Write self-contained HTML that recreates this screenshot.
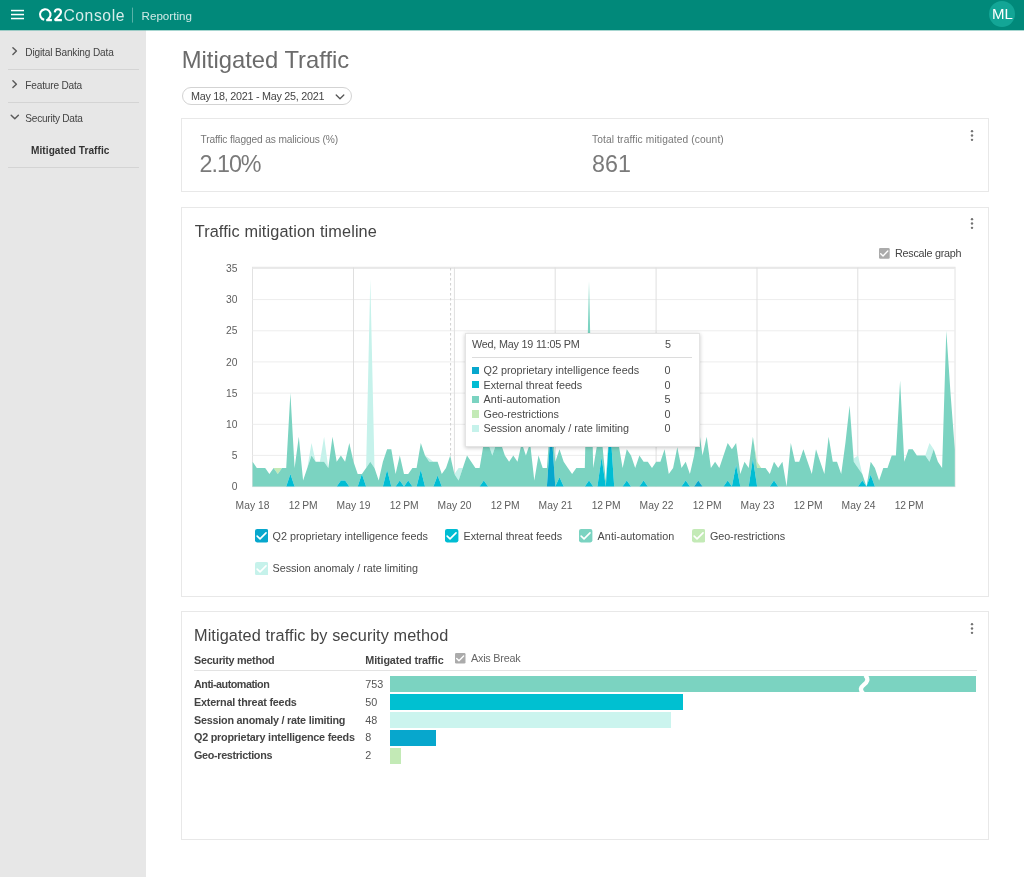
<!DOCTYPE html>
<html><head><meta charset="utf-8"><title>Mitigated Traffic</title>
<style>
html,body{margin:0;padding:0;}
body{width:1024px;height:877px;position:relative;overflow:hidden;background:#fff;font-family:"Liberation Sans",sans-serif;}
.a{position:absolute;}
.t{position:absolute;white-space:nowrap;}
#txt{position:absolute;left:0;top:0;width:1024px;height:877px;will-change:transform;}
.hdr{left:0;top:0;width:1024px;height:30px;background:#01897a;}
.side{left:0;top:30px;width:146px;height:847px;background:#e7e7e7;}
.sl{left:8px;width:131px;height:1px;background:#d4d4d4;}
.card{background:#fff;border:1px solid #e8e8e8;box-sizing:border-box;}
</style></head><body>
<div class="a hdr"></div>
<svg class="a" style="left:0;top:0" width="200" height="30" viewBox="0 0 200 30">
 <g fill="#fff"><rect x="11" y="9.8" width="13" height="1.5"/><rect x="11" y="13.8" width="13" height="1.5"/><rect x="11" y="17.8" width="13" height="1.5"/></g>
 <path d="M44.2 19.7 A5.25 5.25 0 1 1 47.7 19.2 M46.2 20.1 H51.9" fill="none" stroke="#fff" stroke-width="2.1"/>
 <path d="M54.75 12.4 C54.9 10.4 56.3 9.3 58 9.3 C59.8 9.3 61 10.5 61 12.1 C61 13.5 60.2 14.5 58.9 15.8 L55.2 19.5 L55.2 20.15 H61.9" fill="none" stroke="#fff" stroke-width="2.1" stroke-linejoin="bevel"/>
 <rect x="132" y="7.6" width="1" height="15" fill="#fff" opacity=".35"/>
</svg>
<div class="a" style="left:989px;top:1px;width:26px;height:26px;border-radius:13px;background:#13a696;"></div>
<div class="a side"></div>
<div class="a" style="left:0;top:30px;width:1024px;height:1px;background:#5fb5aa;opacity:.55"></div>
<div class="a sl" style="top:69px"></div><div class="a sl" style="top:102px"></div><div class="a sl" style="top:167px"></div>
<svg class="a" style="left:0;top:30px" width="30" height="120" viewBox="0 0 30 120">
 <g fill="none" stroke="#5a5a5a" stroke-width="1.45" stroke-linecap="round" stroke-linejoin="round">
 <path d="M12.9 17.7 L16.4 21.1 L12.9 24.5"/>
 <path d="M12.9 50.8 L16.4 54.2 L12.9 57.6"/>
 <path d="M11.2 85.2 L14.8 88.8 L18.4 85.2"/>
 </g></svg>
<div class="a" style="left:181.5px;top:87.2px;width:170px;height:18px;border:1px solid #d3d3d3;border-radius:9.5px;box-sizing:border-box;background:#fff"></div>
<svg class="a" style="left:334px;top:92px" width="12" height="10" viewBox="0 0 12 10"><path d="M2.2 3 L6 6.8 L9.8 3" fill="none" stroke="#555" stroke-width="1.3" stroke-linecap="round" stroke-linejoin="round"/></svg>

<div class="a card" style="left:181px;top:118px;width:808px;height:74px"></div>
<div class="a card" style="left:181px;top:207px;width:808px;height:390px"></div>
<div class="a card" style="left:181px;top:611px;width:808px;height:229px"></div>
<svg class="a" style="left:970.0px;top:128.60px" width="4" height="13" viewBox="0 0 4 13"><circle cx="2" cy="2.15" r="1.2" fill="#727272"/><circle cx="2" cy="6.5" r="1.2" fill="#727272"/><circle cx="2" cy="10.85" r="1.2" fill="#727272"/></svg><svg class="a" style="left:970.0px;top:217.15px" width="4" height="13" viewBox="0 0 4 13"><circle cx="2" cy="2.15" r="1.2" fill="#727272"/><circle cx="2" cy="6.5" r="1.2" fill="#727272"/><circle cx="2" cy="10.85" r="1.2" fill="#727272"/></svg><svg class="a" style="left:970.0px;top:621.90px" width="4" height="13" viewBox="0 0 4 13"><circle cx="2" cy="2.15" r="1.2" fill="#727272"/><circle cx="2" cy="6.5" r="1.2" fill="#727272"/><circle cx="2" cy="10.85" r="1.2" fill="#727272"/></svg><svg class="a" style="left:878.9px;top:248.0px" width="10.7" height="10.7" viewBox="0 0 13 13"><rect width="13" height="13" rx="1.5" fill="#ababab"/><path d="M2.1 6.9 L4.9 9.6 L10.7 3.7" fill="none" stroke="#fff" stroke-width="1.7" stroke-linecap="round" stroke-linejoin="round"/></svg><svg class="a" style="left:455.2px;top:653.0px" width="10.5" height="10.5" viewBox="0 0 13 13"><rect width="13" height="13" rx="1.5" fill="#ababab"/><path d="M2.1 6.9 L4.9 9.6 L10.7 3.7" fill="none" stroke="#fff" stroke-width="1.7" stroke-linecap="round" stroke-linejoin="round"/></svg>
<svg class="a" style="left:0;top:0" width="1024" height="877" viewBox="0 0 1024 877">
<rect x="252.5" y="267.3" width="702.5" height="219.3" fill="#fff" stroke="#e2e2e2" stroke-width="1"/>
<line x1="252.5" x2="955" y1="268.2" y2="268.2" stroke="#eaeaea" stroke-width="1.4"/>
<line x1="252.5" x2="955" y1="299.6" y2="299.6" stroke="#ededed" stroke-width="1"/>
<line x1="252.5" x2="955" y1="330.8" y2="330.8" stroke="#ededed" stroke-width="1"/>
<line x1="252.5" x2="955" y1="361.9" y2="361.9" stroke="#ededed" stroke-width="1"/>
<line x1="252.5" x2="955" y1="393.1" y2="393.1" stroke="#ededed" stroke-width="1"/>
<line x1="252.5" x2="955" y1="424.3" y2="424.3" stroke="#ededed" stroke-width="1"/>
<line x1="252.5" x2="955" y1="455.4" y2="455.4" stroke="#ededed" stroke-width="1"/>
<line x1="353.5" x2="353.5" y1="267.5" y2="486.5" stroke="#dfdfdf" stroke-width="1"/>
<line x1="454.4" x2="454.4" y1="267.5" y2="486.5" stroke="#dfdfdf" stroke-width="1"/>
<line x1="555.2" x2="555.2" y1="267.5" y2="486.5" stroke="#dfdfdf" stroke-width="1"/>
<line x1="656.1" x2="656.1" y1="267.5" y2="486.5" stroke="#dfdfdf" stroke-width="1"/>
<line x1="757.0" x2="757.0" y1="267.5" y2="486.5" stroke="#dfdfdf" stroke-width="1"/>
<line x1="857.8" x2="857.8" y1="267.5" y2="486.5" stroke="#dfdfdf" stroke-width="1"/>

<line x1="450.6" x2="450.6" y1="268" y2="486" stroke="#cfcfcf" stroke-width="1" stroke-dasharray="2.5,2.5"/>
<path d="M252.6,461.7 L256.8,467.9 L261.0,467.9 L265.2,467.9 L269.4,474.1 L273.6,467.9 L277.8,467.9 L282.0,467.9 L286.2,467.9 L290.4,393.1 L294.6,467.9 L298.8,436.7 L303.1,480.4 L307.3,467.9 L311.5,443.0 L315.7,461.7 L319.9,461.7 L324.1,436.7 L328.3,467.9 L332.5,436.7 L336.7,461.7 L340.9,455.4 L345.1,461.7 L349.3,443.0 L353.5,461.7 L357.7,474.1 L361.9,474.1 L366.1,467.9 L370.3,279.0 L374.5,467.9 L378.7,480.4 L382.9,461.7 L387.1,449.2 L391.3,449.2 L395.6,474.1 L399.8,455.4 L404.0,474.1 L408.2,474.1 L412.4,467.9 L416.6,467.9 L420.8,443.0 L425.0,455.4 L429.2,458.5 L433.4,461.7 L437.6,461.7 L441.8,474.1 L446.0,467.9 L450.2,455.4 L454.4,474.1 L458.6,467.9 L462.8,467.9 L467.0,455.4 L471.2,461.7 L475.4,467.9 L479.6,467.9 L483.8,443.0 L488.1,443.0 L492.3,443.0 L496.5,443.0 L500.7,443.0 L504.9,455.4 L509.1,461.7 L513.3,455.4 L517.5,461.7 L521.7,443.0 L525.9,455.4 L530.1,443.0 L534.3,480.4 L538.5,455.4 L542.7,467.9 L546.9,467.9 L551.1,411.8 L555.3,461.7 L559.5,449.2 L563.7,461.7 L567.9,467.9 L572.1,474.1 L576.3,467.9 L580.6,467.9 L584.8,467.9 L589.0,280.9 L593.2,467.9 L597.4,443.0 L601.6,436.7 L605.8,480.4 L610.0,418.0 L614.2,443.0 L618.4,443.0 L622.6,467.9 L626.8,449.2 L631.0,455.4 L635.2,467.9 L639.4,455.4 L643.6,461.7 L647.8,461.7 L652.0,467.9 L656.2,461.7 L660.4,461.7 L664.6,449.2 L668.8,474.1 L673.1,467.9 L677.3,447.3 L681.5,467.9 L685.7,461.7 L689.9,474.1 L694.1,455.4 L698.3,424.3 L702.5,455.4 L706.7,436.7 L710.9,467.9 L715.1,461.7 L719.3,467.9 L723.5,455.4 L727.7,443.0 L731.9,449.2 L736.1,443.0 L740.3,474.1 L744.5,461.7 L748.7,467.9 L752.9,436.7 L757.1,461.7 L761.3,467.9 L765.5,467.9 L769.8,474.1 L774.0,461.7 L778.2,467.9 L782.4,461.7 L786.6,486.6 L790.8,443.0 L795.0,461.7 L799.2,461.7 L803.4,449.2 L807.6,461.7 L811.8,474.1 L816.0,449.2 L820.2,461.7 L824.4,474.1 L828.6,436.7 L832.8,461.7 L837.0,461.7 L841.2,474.1 L845.4,443.0 L849.6,405.6 L853.8,458.5 L858.0,455.4 L862.3,474.1 L866.5,486.6 L870.7,461.7 L874.9,467.9 L879.1,480.4 L883.3,467.9 L887.5,467.9 L891.7,455.4 L895.9,455.4 L900.1,380.6 L904.3,461.7 L908.5,449.2 L912.7,449.2 L916.9,455.4 L921.1,455.4 L925.3,455.4 L929.5,443.0 L933.7,449.2 L937.9,461.7 L942.1,467.9 L946.3,330.8 L950.5,393.1 L954.8,449.2 L954.8,449.2 L950.5,393.1 L946.3,330.8 L942.1,467.9 L937.9,461.7 L933.7,449.2 L929.5,461.7 L925.3,455.4 L921.1,455.4 L916.9,455.4 L912.7,449.2 L908.5,449.2 L904.3,461.7 L900.1,380.6 L895.9,455.4 L891.7,455.4 L887.5,467.9 L883.3,467.9 L879.1,480.4 L874.9,467.9 L870.7,461.7 L866.5,486.6 L862.3,474.1 L858.0,467.9 L853.8,461.7 L849.6,405.6 L845.4,443.0 L841.2,474.1 L837.0,461.7 L832.8,461.7 L828.6,436.7 L824.4,474.1 L820.2,461.7 L816.0,449.2 L811.8,474.1 L807.6,461.7 L803.4,449.2 L799.2,461.7 L795.0,461.7 L790.8,443.0 L786.6,486.6 L782.4,461.7 L778.2,467.9 L774.0,461.7 L769.8,474.1 L765.5,467.9 L761.3,467.9 L757.1,461.7 L752.9,436.7 L748.7,467.9 L744.5,461.7 L740.3,474.1 L736.1,443.0 L731.9,449.2 L727.7,443.0 L723.5,455.4 L719.3,467.9 L715.1,461.7 L710.9,467.9 L706.7,436.7 L702.5,455.4 L698.3,424.3 L694.1,455.4 L689.9,474.1 L685.7,461.7 L681.5,467.9 L677.3,447.3 L673.1,467.9 L668.8,474.1 L664.6,449.2 L660.4,461.7 L656.2,461.7 L652.0,467.9 L647.8,461.7 L643.6,461.7 L639.4,455.4 L635.2,467.9 L631.0,455.4 L626.8,449.2 L622.6,467.9 L618.4,443.0 L614.2,443.0 L610.0,418.0 L605.8,480.4 L601.6,436.7 L597.4,443.0 L593.2,467.9 L589.0,280.9 L584.8,467.9 L580.6,467.9 L576.3,467.9 L572.1,474.1 L567.9,467.9 L563.7,461.7 L559.5,449.2 L555.3,461.7 L551.1,411.8 L546.9,467.9 L542.7,467.9 L538.5,455.4 L534.3,480.4 L530.1,443.0 L525.9,455.4 L521.7,443.0 L517.5,461.7 L513.3,455.4 L509.1,461.7 L504.9,455.4 L500.7,443.0 L496.5,443.0 L492.3,455.4 L488.1,443.0 L483.8,443.0 L479.6,467.9 L475.4,467.9 L471.2,461.7 L467.0,455.4 L462.8,467.9 L458.6,480.4 L454.4,474.1 L450.2,455.4 L446.0,467.9 L441.8,474.1 L437.6,461.7 L433.4,461.7 L429.2,461.7 L425.0,455.4 L420.8,443.0 L416.6,467.9 L412.4,467.9 L408.2,474.1 L404.0,474.1 L399.8,455.4 L395.6,474.1 L391.3,449.2 L387.1,449.2 L382.9,461.7 L378.7,480.4 L374.5,467.9 L370.3,461.7 L366.1,467.9 L361.9,474.1 L357.7,474.1 L353.5,461.7 L349.3,443.0 L345.1,461.7 L340.9,455.4 L336.7,461.7 L332.5,436.7 L328.3,467.9 L324.1,461.7 L319.9,461.7 L315.7,461.7 L311.5,455.4 L307.3,467.9 L303.1,480.4 L298.8,436.7 L294.6,467.9 L290.4,393.1 L286.2,467.9 L282.0,467.9 L277.8,467.9 L273.6,467.9 L269.4,474.1 L265.2,467.9 L261.0,467.9 L256.8,467.9 L252.6,461.7Z" fill="#c6f2eb"/>
<path d="M252.6,461.7 L256.8,467.9 L261.0,467.9 L265.2,467.9 L269.4,474.1 L273.6,467.9 L277.8,467.9 L282.0,467.9 L286.2,467.9 L290.4,393.1 L294.6,467.9 L298.8,436.7 L303.1,480.4 L307.3,467.9 L311.5,455.4 L315.7,461.7 L319.9,461.7 L324.1,461.7 L328.3,467.9 L332.5,436.7 L336.7,461.7 L340.9,455.4 L345.1,461.7 L349.3,443.0 L353.5,461.7 L357.7,474.1 L361.9,474.1 L366.1,467.9 L370.3,461.7 L374.5,467.9 L378.7,480.4 L382.9,461.7 L387.1,449.2 L391.3,449.2 L395.6,474.1 L399.8,455.4 L404.0,474.1 L408.2,474.1 L412.4,467.9 L416.6,467.9 L420.8,443.0 L425.0,455.4 L429.2,461.7 L433.4,461.7 L437.6,461.7 L441.8,474.1 L446.0,467.9 L450.2,455.4 L454.4,474.1 L458.6,480.4 L462.8,467.9 L467.0,455.4 L471.2,461.7 L475.4,467.9 L479.6,467.9 L483.8,443.0 L488.1,443.0 L492.3,455.4 L496.5,443.0 L500.7,443.0 L504.9,455.4 L509.1,461.7 L513.3,455.4 L517.5,461.7 L521.7,443.0 L525.9,455.4 L530.1,443.0 L534.3,480.4 L538.5,455.4 L542.7,467.9 L546.9,467.9 L551.1,411.8 L555.3,461.7 L559.5,449.2 L563.7,461.7 L567.9,467.9 L572.1,474.1 L576.3,467.9 L580.6,467.9 L584.8,467.9 L589.0,280.9 L593.2,467.9 L597.4,443.0 L601.6,436.7 L605.8,480.4 L610.0,418.0 L614.2,443.0 L618.4,443.0 L622.6,467.9 L626.8,449.2 L631.0,455.4 L635.2,467.9 L639.4,455.4 L643.6,461.7 L647.8,461.7 L652.0,467.9 L656.2,461.7 L660.4,461.7 L664.6,449.2 L668.8,474.1 L673.1,467.9 L677.3,447.3 L681.5,467.9 L685.7,461.7 L689.9,474.1 L694.1,455.4 L698.3,424.3 L702.5,455.4 L706.7,436.7 L710.9,467.9 L715.1,461.7 L719.3,467.9 L723.5,455.4 L727.7,443.0 L731.9,449.2 L736.1,443.0 L740.3,474.1 L744.5,461.7 L748.7,467.9 L752.9,436.7 L757.1,461.7 L761.3,467.9 L765.5,467.9 L769.8,474.1 L774.0,461.7 L778.2,467.9 L782.4,461.7 L786.6,486.6 L790.8,443.0 L795.0,461.7 L799.2,461.7 L803.4,449.2 L807.6,461.7 L811.8,474.1 L816.0,449.2 L820.2,461.7 L824.4,474.1 L828.6,436.7 L832.8,461.7 L837.0,461.7 L841.2,474.1 L845.4,443.0 L849.6,405.6 L853.8,461.7 L858.0,467.9 L862.3,474.1 L866.5,486.6 L870.7,461.7 L874.9,467.9 L879.1,480.4 L883.3,467.9 L887.5,467.9 L891.7,455.4 L895.9,455.4 L900.1,380.6 L904.3,461.7 L908.5,449.2 L912.7,449.2 L916.9,455.4 L921.1,455.4 L925.3,455.4 L929.5,461.7 L933.7,449.2 L937.9,461.7 L942.1,467.9 L946.3,330.8 L950.5,393.1 L954.8,449.2 L954.8,449.2 L950.5,393.1 L946.3,330.8 L942.1,467.9 L937.9,461.7 L933.7,449.2 L929.5,461.7 L925.3,455.4 L921.1,455.4 L916.9,455.4 L912.7,449.2 L908.5,449.2 L904.3,461.7 L900.1,380.6 L895.9,455.4 L891.7,455.4 L887.5,467.9 L883.3,467.9 L879.1,480.4 L874.9,467.9 L870.7,461.7 L866.5,486.6 L862.3,474.1 L858.0,467.9 L853.8,461.7 L849.6,405.6 L845.4,443.0 L841.2,474.1 L837.0,461.7 L832.8,461.7 L828.6,436.7 L824.4,474.1 L820.2,461.7 L816.0,449.2 L811.8,474.1 L807.6,461.7 L803.4,449.2 L799.2,461.7 L795.0,461.7 L790.8,443.0 L786.6,486.6 L782.4,461.7 L778.2,467.9 L774.0,461.7 L769.8,474.1 L765.5,467.9 L761.3,467.9 L757.1,467.9 L752.9,436.7 L748.7,467.9 L744.5,461.7 L740.3,474.1 L736.1,443.0 L731.9,449.2 L727.7,443.0 L723.5,455.4 L719.3,467.9 L715.1,461.7 L710.9,467.9 L706.7,436.7 L702.5,455.4 L698.3,424.3 L694.1,455.4 L689.9,474.1 L685.7,461.7 L681.5,467.9 L677.3,447.3 L673.1,467.9 L668.8,474.1 L664.6,449.2 L660.4,461.7 L656.2,461.7 L652.0,467.9 L647.8,461.7 L643.6,461.7 L639.4,455.4 L635.2,467.9 L631.0,455.4 L626.8,449.2 L622.6,467.9 L618.4,443.0 L614.2,443.0 L610.0,418.0 L605.8,480.4 L601.6,436.7 L597.4,443.0 L593.2,467.9 L589.0,280.9 L584.8,467.9 L580.6,467.9 L576.3,467.9 L572.1,474.1 L567.9,467.9 L563.7,461.7 L559.5,449.2 L555.3,461.7 L551.1,411.8 L546.9,467.9 L542.7,467.9 L538.5,455.4 L534.3,480.4 L530.1,443.0 L525.9,455.4 L521.7,443.0 L517.5,461.7 L513.3,455.4 L509.1,461.7 L504.9,455.4 L500.7,443.0 L496.5,443.0 L492.3,455.4 L488.1,443.0 L483.8,443.0 L479.6,467.9 L475.4,467.9 L471.2,461.7 L467.0,455.4 L462.8,467.9 L458.6,480.4 L454.4,474.1 L450.2,455.4 L446.0,467.9 L441.8,474.1 L437.6,461.7 L433.4,461.7 L429.2,461.7 L425.0,455.4 L420.8,443.0 L416.6,467.9 L412.4,467.9 L408.2,474.1 L404.0,474.1 L399.8,455.4 L395.6,474.1 L391.3,449.2 L387.1,449.2 L382.9,461.7 L378.7,480.4 L374.5,467.9 L370.3,461.7 L366.1,467.9 L361.9,474.1 L357.7,474.1 L353.5,461.7 L349.3,443.0 L345.1,461.7 L340.9,455.4 L336.7,461.7 L332.5,436.7 L328.3,467.9 L324.1,461.7 L319.9,461.7 L315.7,461.7 L311.5,455.4 L307.3,467.9 L303.1,480.4 L298.8,436.7 L294.6,467.9 L290.4,393.1 L286.2,467.9 L282.0,467.9 L277.8,474.1 L273.6,467.9 L269.4,474.1 L265.2,467.9 L261.0,467.9 L256.8,467.9 L252.6,461.7Z" fill="#c3eab6"/>
<path d="M252.6,461.7 L256.8,467.9 L261.0,467.9 L265.2,467.9 L269.4,474.1 L273.6,467.9 L277.8,474.1 L282.0,467.9 L286.2,467.9 L290.4,393.1 L294.6,467.9 L298.8,436.7 L303.1,480.4 L307.3,467.9 L311.5,455.4 L315.7,461.7 L319.9,461.7 L324.1,461.7 L328.3,467.9 L332.5,436.7 L336.7,461.7 L340.9,455.4 L345.1,461.7 L349.3,443.0 L353.5,461.7 L357.7,474.1 L361.9,474.1 L366.1,467.9 L370.3,461.7 L374.5,467.9 L378.7,480.4 L382.9,461.7 L387.1,449.2 L391.3,449.2 L395.6,474.1 L399.8,455.4 L404.0,474.1 L408.2,474.1 L412.4,467.9 L416.6,467.9 L420.8,443.0 L425.0,455.4 L429.2,461.7 L433.4,461.7 L437.6,461.7 L441.8,474.1 L446.0,467.9 L450.2,455.4 L454.4,474.1 L458.6,480.4 L462.8,467.9 L467.0,455.4 L471.2,461.7 L475.4,467.9 L479.6,467.9 L483.8,443.0 L488.1,443.0 L492.3,455.4 L496.5,443.0 L500.7,443.0 L504.9,455.4 L509.1,461.7 L513.3,455.4 L517.5,461.7 L521.7,443.0 L525.9,455.4 L530.1,443.0 L534.3,480.4 L538.5,455.4 L542.7,467.9 L546.9,467.9 L551.1,411.8 L555.3,461.7 L559.5,449.2 L563.7,461.7 L567.9,467.9 L572.1,474.1 L576.3,467.9 L580.6,467.9 L584.8,467.9 L589.0,280.9 L593.2,467.9 L597.4,443.0 L601.6,436.7 L605.8,480.4 L610.0,418.0 L614.2,443.0 L618.4,443.0 L622.6,467.9 L626.8,449.2 L631.0,455.4 L635.2,467.9 L639.4,455.4 L643.6,461.7 L647.8,461.7 L652.0,467.9 L656.2,461.7 L660.4,461.7 L664.6,449.2 L668.8,474.1 L673.1,467.9 L677.3,447.3 L681.5,467.9 L685.7,461.7 L689.9,474.1 L694.1,455.4 L698.3,424.3 L702.5,455.4 L706.7,436.7 L710.9,467.9 L715.1,461.7 L719.3,467.9 L723.5,455.4 L727.7,443.0 L731.9,449.2 L736.1,443.0 L740.3,474.1 L744.5,461.7 L748.7,467.9 L752.9,436.7 L757.1,467.9 L761.3,467.9 L765.5,467.9 L769.8,474.1 L774.0,461.7 L778.2,467.9 L782.4,461.7 L786.6,486.6 L790.8,443.0 L795.0,461.7 L799.2,461.7 L803.4,449.2 L807.6,461.7 L811.8,474.1 L816.0,449.2 L820.2,461.7 L824.4,474.1 L828.6,436.7 L832.8,461.7 L837.0,461.7 L841.2,474.1 L845.4,443.0 L849.6,405.6 L853.8,461.7 L858.0,467.9 L862.3,474.1 L866.5,486.6 L870.7,461.7 L874.9,467.9 L879.1,480.4 L883.3,467.9 L887.5,467.9 L891.7,455.4 L895.9,455.4 L900.1,380.6 L904.3,461.7 L908.5,449.2 L912.7,449.2 L916.9,455.4 L921.1,455.4 L925.3,455.4 L929.5,461.7 L933.7,449.2 L937.9,461.7 L942.1,467.9 L946.3,330.8 L950.5,393.1 L954.8,449.2 L954.8,486.6 L950.5,486.6 L946.3,486.6 L942.1,486.6 L937.9,486.6 L933.7,486.6 L929.5,486.6 L925.3,486.6 L921.1,486.6 L916.9,486.6 L912.7,486.6 L908.5,486.6 L904.3,486.6 L900.1,486.6 L895.9,486.6 L891.7,486.6 L887.5,486.6 L883.3,486.6 L879.1,486.6 L874.9,486.6 L870.7,474.8 L866.5,486.6 L862.3,480.4 L858.0,486.6 L853.8,486.6 L849.6,486.6 L845.4,486.6 L841.2,486.6 L837.0,486.6 L832.8,486.6 L828.6,486.6 L824.4,486.6 L820.2,486.6 L816.0,486.6 L811.8,486.6 L807.6,486.6 L803.4,486.6 L799.2,486.6 L795.0,486.6 L790.8,486.6 L786.6,486.6 L782.4,486.6 L778.2,486.6 L774.0,480.4 L769.8,486.6 L765.5,486.6 L761.3,486.6 L757.1,486.6 L752.9,458.5 L748.7,486.6 L744.5,486.6 L740.3,486.6 L736.1,464.8 L731.9,486.6 L727.7,480.4 L723.5,486.6 L719.3,486.6 L715.1,486.6 L710.9,486.6 L706.7,486.6 L702.5,486.6 L698.3,480.4 L694.1,486.6 L689.9,486.6 L685.7,480.4 L681.5,486.6 L677.3,486.6 L673.1,486.6 L668.8,486.6 L664.6,486.6 L660.4,486.6 L656.2,486.6 L652.0,486.6 L647.8,486.6 L643.6,480.4 L639.4,486.6 L635.2,486.6 L631.0,486.6 L626.8,480.4 L622.6,486.6 L618.4,486.6 L614.2,486.6 L610.0,424.3 L605.8,486.6 L601.6,457.3 L597.4,486.6 L593.2,486.6 L589.0,480.4 L584.8,486.6 L580.6,486.6 L576.3,486.6 L572.1,486.6 L567.9,486.6 L563.7,486.6 L559.5,477.2 L555.3,486.6 L551.1,424.3 L546.9,486.6 L542.7,486.6 L538.5,486.6 L534.3,486.6 L530.1,486.6 L525.9,486.6 L521.7,486.6 L517.5,486.6 L513.3,486.6 L509.1,486.6 L504.9,486.6 L500.7,486.6 L496.5,486.6 L492.3,486.6 L488.1,486.6 L483.8,480.4 L479.6,486.6 L475.4,486.6 L471.2,486.6 L467.0,486.6 L462.8,486.6 L458.6,486.6 L454.4,486.6 L450.2,486.6 L446.0,486.6 L441.8,486.6 L437.6,475.4 L433.4,486.6 L429.2,486.6 L425.0,486.6 L420.8,469.8 L416.6,486.6 L412.4,486.6 L408.2,480.4 L404.0,486.6 L399.8,480.4 L395.6,486.6 L391.3,486.6 L387.1,469.8 L382.9,486.6 L378.7,486.6 L374.5,486.6 L370.3,486.6 L366.1,486.6 L361.9,474.1 L357.7,486.6 L353.5,486.6 L349.3,486.6 L345.1,480.4 L340.9,480.4 L336.7,486.6 L332.5,486.6 L328.3,486.6 L324.1,486.6 L319.9,486.6 L315.7,486.6 L311.5,486.6 L307.3,486.6 L303.1,486.6 L298.8,486.6 L294.6,486.6 L290.4,474.1 L286.2,486.6 L282.0,486.6 L277.8,486.6 L273.6,486.6 L269.4,486.6 L265.2,486.6 L261.0,486.6 L256.8,486.6 L252.6,486.6Z" fill="#7bd3c1"/>
<path d="M252.6,486.6 L256.8,486.6 L261.0,486.6 L265.2,486.6 L269.4,486.6 L273.6,486.6 L277.8,486.6 L282.0,486.6 L286.2,486.6 L290.4,474.1 L294.6,486.6 L298.8,486.6 L303.1,486.6 L307.3,486.6 L311.5,486.6 L315.7,486.6 L319.9,486.6 L324.1,486.6 L328.3,486.6 L332.5,486.6 L336.7,486.6 L340.9,480.4 L345.1,480.4 L349.3,486.6 L353.5,486.6 L357.7,486.6 L361.9,474.1 L366.1,486.6 L370.3,486.6 L374.5,486.6 L378.7,486.6 L382.9,486.6 L387.1,469.8 L391.3,486.6 L395.6,486.6 L399.8,480.4 L404.0,486.6 L408.2,480.4 L412.4,486.6 L416.6,486.6 L420.8,469.8 L425.0,486.6 L429.2,486.6 L433.4,486.6 L437.6,475.4 L441.8,486.6 L446.0,486.6 L450.2,486.6 L454.4,486.6 L458.6,486.6 L462.8,486.6 L467.0,486.6 L471.2,486.6 L475.4,486.6 L479.6,486.6 L483.8,480.4 L488.1,486.6 L492.3,486.6 L496.5,486.6 L500.7,486.6 L504.9,486.6 L509.1,486.6 L513.3,486.6 L517.5,486.6 L521.7,486.6 L525.9,486.6 L530.1,486.6 L534.3,486.6 L538.5,486.6 L542.7,486.6 L546.9,486.6 L551.1,424.3 L555.3,486.6 L559.5,477.2 L563.7,486.6 L567.9,486.6 L572.1,486.6 L576.3,486.6 L580.6,486.6 L584.8,486.6 L589.0,480.4 L593.2,486.6 L597.4,486.6 L601.6,457.3 L605.8,486.6 L610.0,424.3 L614.2,486.6 L618.4,486.6 L622.6,486.6 L626.8,480.4 L631.0,486.6 L635.2,486.6 L639.4,486.6 L643.6,480.4 L647.8,486.6 L652.0,486.6 L656.2,486.6 L660.4,486.6 L664.6,486.6 L668.8,486.6 L673.1,486.6 L677.3,486.6 L681.5,486.6 L685.7,480.4 L689.9,486.6 L694.1,486.6 L698.3,480.4 L702.5,486.6 L706.7,486.6 L710.9,486.6 L715.1,486.6 L719.3,486.6 L723.5,486.6 L727.7,480.4 L731.9,486.6 L736.1,464.8 L740.3,486.6 L744.5,486.6 L748.7,486.6 L752.9,458.5 L757.1,486.6 L761.3,486.6 L765.5,486.6 L769.8,486.6 L774.0,480.4 L778.2,486.6 L782.4,486.6 L786.6,486.6 L790.8,486.6 L795.0,486.6 L799.2,486.6 L803.4,486.6 L807.6,486.6 L811.8,486.6 L816.0,486.6 L820.2,486.6 L824.4,486.6 L828.6,486.6 L832.8,486.6 L837.0,486.6 L841.2,486.6 L845.4,486.6 L849.6,486.6 L853.8,486.6 L858.0,486.6 L862.3,480.4 L866.5,486.6 L870.7,474.8 L874.9,486.6 L879.1,486.6 L883.3,486.6 L887.5,486.6 L891.7,486.6 L895.9,486.6 L900.1,486.6 L904.3,486.6 L908.5,486.6 L912.7,486.6 L916.9,486.6 L921.1,486.6 L925.3,486.6 L929.5,486.6 L933.7,486.6 L937.9,486.6 L942.1,486.6 L946.3,486.6 L950.5,486.6 L954.8,486.6 L954.8,486.6 L950.5,486.6 L946.3,486.6 L942.1,486.6 L937.9,486.6 L933.7,486.6 L929.5,486.6 L925.3,486.6 L921.1,486.6 L916.9,486.6 L912.7,486.6 L908.5,486.6 L904.3,486.6 L900.1,486.6 L895.9,486.6 L891.7,486.6 L887.5,486.6 L883.3,486.6 L879.1,486.6 L874.9,486.6 L870.7,486.6 L866.5,486.6 L862.3,486.6 L858.0,486.6 L853.8,486.6 L849.6,486.6 L845.4,486.6 L841.2,486.6 L837.0,486.6 L832.8,486.6 L828.6,486.6 L824.4,486.6 L820.2,486.6 L816.0,486.6 L811.8,486.6 L807.6,486.6 L803.4,486.6 L799.2,486.6 L795.0,486.6 L790.8,486.6 L786.6,486.6 L782.4,486.6 L778.2,486.6 L774.0,486.6 L769.8,486.6 L765.5,486.6 L761.3,486.6 L757.1,486.6 L752.9,486.6 L748.7,486.6 L744.5,486.6 L740.3,486.6 L736.1,486.6 L731.9,486.6 L727.7,486.6 L723.5,486.6 L719.3,486.6 L715.1,486.6 L710.9,486.6 L706.7,486.6 L702.5,486.6 L698.3,480.4 L694.1,486.6 L689.9,486.6 L685.7,486.6 L681.5,486.6 L677.3,486.6 L673.1,486.6 L668.8,486.6 L664.6,486.6 L660.4,486.6 L656.2,486.6 L652.0,486.6 L647.8,486.6 L643.6,486.6 L639.4,486.6 L635.2,486.6 L631.0,486.6 L626.8,486.6 L622.6,486.6 L618.4,486.6 L614.2,486.6 L610.0,486.6 L605.8,486.6 L601.6,486.6 L597.4,486.6 L593.2,486.6 L589.0,486.6 L584.8,486.6 L580.6,486.6 L576.3,486.6 L572.1,486.6 L567.9,486.6 L563.7,486.6 L559.5,486.6 L555.3,486.6 L551.1,424.3 L546.9,486.6 L542.7,486.6 L538.5,486.6 L534.3,486.6 L530.1,486.6 L525.9,486.6 L521.7,486.6 L517.5,486.6 L513.3,486.6 L509.1,486.6 L504.9,486.6 L500.7,486.6 L496.5,486.6 L492.3,486.6 L488.1,486.6 L483.8,486.6 L479.6,486.6 L475.4,486.6 L471.2,486.6 L467.0,486.6 L462.8,486.6 L458.6,486.6 L454.4,486.6 L450.2,486.6 L446.0,486.6 L441.8,486.6 L437.6,486.6 L433.4,486.6 L429.2,486.6 L425.0,486.6 L420.8,486.6 L416.6,486.6 L412.4,486.6 L408.2,486.6 L404.0,486.6 L399.8,486.6 L395.6,486.6 L391.3,486.6 L387.1,486.6 L382.9,486.6 L378.7,486.6 L374.5,486.6 L370.3,486.6 L366.1,486.6 L361.9,486.6 L357.7,486.6 L353.5,486.6 L349.3,486.6 L345.1,486.6 L340.9,486.6 L336.7,486.6 L332.5,486.6 L328.3,486.6 L324.1,486.6 L319.9,486.6 L315.7,486.6 L311.5,486.6 L307.3,486.6 L303.1,486.6 L298.8,486.6 L294.6,486.6 L290.4,486.6 L286.2,486.6 L282.0,486.6 L277.8,486.6 L273.6,486.6 L269.4,486.6 L265.2,486.6 L261.0,486.6 L256.8,486.6 L252.6,486.6Z" fill="#00bdd3"/>
<path d="M252.6,486.6 L256.8,486.6 L261.0,486.6 L265.2,486.6 L269.4,486.6 L273.6,486.6 L277.8,486.6 L282.0,486.6 L286.2,486.6 L290.4,486.6 L294.6,486.6 L298.8,486.6 L303.1,486.6 L307.3,486.6 L311.5,486.6 L315.7,486.6 L319.9,486.6 L324.1,486.6 L328.3,486.6 L332.5,486.6 L336.7,486.6 L340.9,486.6 L345.1,486.6 L349.3,486.6 L353.5,486.6 L357.7,486.6 L361.9,486.6 L366.1,486.6 L370.3,486.6 L374.5,486.6 L378.7,486.6 L382.9,486.6 L387.1,486.6 L391.3,486.6 L395.6,486.6 L399.8,486.6 L404.0,486.6 L408.2,486.6 L412.4,486.6 L416.6,486.6 L420.8,486.6 L425.0,486.6 L429.2,486.6 L433.4,486.6 L437.6,486.6 L441.8,486.6 L446.0,486.6 L450.2,486.6 L454.4,486.6 L458.6,486.6 L462.8,486.6 L467.0,486.6 L471.2,486.6 L475.4,486.6 L479.6,486.6 L483.8,486.6 L488.1,486.6 L492.3,486.6 L496.5,486.6 L500.7,486.6 L504.9,486.6 L509.1,486.6 L513.3,486.6 L517.5,486.6 L521.7,486.6 L525.9,486.6 L530.1,486.6 L534.3,486.6 L538.5,486.6 L542.7,486.6 L546.9,486.6 L551.1,424.3 L555.3,486.6 L559.5,486.6 L563.7,486.6 L567.9,486.6 L572.1,486.6 L576.3,486.6 L580.6,486.6 L584.8,486.6 L589.0,486.6 L593.2,486.6 L597.4,486.6 L601.6,486.6 L605.8,486.6 L610.0,486.6 L614.2,486.6 L618.4,486.6 L622.6,486.6 L626.8,486.6 L631.0,486.6 L635.2,486.6 L639.4,486.6 L643.6,486.6 L647.8,486.6 L652.0,486.6 L656.2,486.6 L660.4,486.6 L664.6,486.6 L668.8,486.6 L673.1,486.6 L677.3,486.6 L681.5,486.6 L685.7,486.6 L689.9,486.6 L694.1,486.6 L698.3,480.4 L702.5,486.6 L706.7,486.6 L710.9,486.6 L715.1,486.6 L719.3,486.6 L723.5,486.6 L727.7,486.6 L731.9,486.6 L736.1,486.6 L740.3,486.6 L744.5,486.6 L748.7,486.6 L752.9,486.6 L757.1,486.6 L761.3,486.6 L765.5,486.6 L769.8,486.6 L774.0,486.6 L778.2,486.6 L782.4,486.6 L786.6,486.6 L790.8,486.6 L795.0,486.6 L799.2,486.6 L803.4,486.6 L807.6,486.6 L811.8,486.6 L816.0,486.6 L820.2,486.6 L824.4,486.6 L828.6,486.6 L832.8,486.6 L837.0,486.6 L841.2,486.6 L845.4,486.6 L849.6,486.6 L853.8,486.6 L858.0,486.6 L862.3,486.6 L866.5,486.6 L870.7,486.6 L874.9,486.6 L879.1,486.6 L883.3,486.6 L887.5,486.6 L891.7,486.6 L895.9,486.6 L900.1,486.6 L904.3,486.6 L908.5,486.6 L912.7,486.6 L916.9,486.6 L921.1,486.6 L925.3,486.6 L929.5,486.6 L933.7,486.6 L937.9,486.6 L942.1,486.6 L946.3,486.6 L950.5,486.6 L954.8,486.6 L954.8,486.6 L950.5,486.6 L946.3,486.6 L942.1,486.6 L937.9,486.6 L933.7,486.6 L929.5,486.6 L925.3,486.6 L921.1,486.6 L916.9,486.6 L912.7,486.6 L908.5,486.6 L904.3,486.6 L900.1,486.6 L895.9,486.6 L891.7,486.6 L887.5,486.6 L883.3,486.6 L879.1,486.6 L874.9,486.6 L870.7,486.6 L866.5,486.6 L862.3,486.6 L858.0,486.6 L853.8,486.6 L849.6,486.6 L845.4,486.6 L841.2,486.6 L837.0,486.6 L832.8,486.6 L828.6,486.6 L824.4,486.6 L820.2,486.6 L816.0,486.6 L811.8,486.6 L807.6,486.6 L803.4,486.6 L799.2,486.6 L795.0,486.6 L790.8,486.6 L786.6,486.6 L782.4,486.6 L778.2,486.6 L774.0,486.6 L769.8,486.6 L765.5,486.6 L761.3,486.6 L757.1,486.6 L752.9,486.6 L748.7,486.6 L744.5,486.6 L740.3,486.6 L736.1,486.6 L731.9,486.6 L727.7,486.6 L723.5,486.6 L719.3,486.6 L715.1,486.6 L710.9,486.6 L706.7,486.6 L702.5,486.6 L698.3,486.6 L694.1,486.6 L689.9,486.6 L685.7,486.6 L681.5,486.6 L677.3,486.6 L673.1,486.6 L668.8,486.6 L664.6,486.6 L660.4,486.6 L656.2,486.6 L652.0,486.6 L647.8,486.6 L643.6,486.6 L639.4,486.6 L635.2,486.6 L631.0,486.6 L626.8,486.6 L622.6,486.6 L618.4,486.6 L614.2,486.6 L610.0,486.6 L605.8,486.6 L601.6,486.6 L597.4,486.6 L593.2,486.6 L589.0,486.6 L584.8,486.6 L580.6,486.6 L576.3,486.6 L572.1,486.6 L567.9,486.6 L563.7,486.6 L559.5,486.6 L555.3,486.6 L551.1,486.6 L546.9,486.6 L542.7,486.6 L538.5,486.6 L534.3,486.6 L530.1,486.6 L525.9,486.6 L521.7,486.6 L517.5,486.6 L513.3,486.6 L509.1,486.6 L504.9,486.6 L500.7,486.6 L496.5,486.6 L492.3,486.6 L488.1,486.6 L483.8,486.6 L479.6,486.6 L475.4,486.6 L471.2,486.6 L467.0,486.6 L462.8,486.6 L458.6,486.6 L454.4,486.6 L450.2,486.6 L446.0,486.6 L441.8,486.6 L437.6,486.6 L433.4,486.6 L429.2,486.6 L425.0,486.6 L420.8,486.6 L416.6,486.6 L412.4,486.6 L408.2,486.6 L404.0,486.6 L399.8,486.6 L395.6,486.6 L391.3,486.6 L387.1,486.6 L382.9,486.6 L378.7,486.6 L374.5,486.6 L370.3,486.6 L366.1,486.6 L361.9,486.6 L357.7,486.6 L353.5,486.6 L349.3,486.6 L345.1,486.6 L340.9,486.6 L336.7,486.6 L332.5,486.6 L328.3,486.6 L324.1,486.6 L319.9,486.6 L315.7,486.6 L311.5,486.6 L307.3,486.6 L303.1,486.6 L298.8,486.6 L294.6,486.6 L290.4,486.6 L286.2,486.6 L282.0,486.6 L277.8,486.6 L273.6,486.6 L269.4,486.6 L265.2,486.6 L261.0,486.6 L256.8,486.6 L252.6,486.6Z" fill="#07a7cd"/>

</svg>
<svg class="a" style="left:254.6px;top:529.4px" width="13.4" height="13.4" viewBox="0 0 13 13"><rect width="13" height="13" rx="2" fill="#07a7cd"/><path d="M2.1 6.9 L4.9 9.6 L10.7 3.7" fill="none" stroke="#fff" stroke-width="1.6" stroke-linecap="round" stroke-linejoin="round"/></svg><svg class="a" style="left:445.2px;top:529.4px" width="13.4" height="13.4" viewBox="0 0 13 13"><rect width="13" height="13" rx="2" fill="#00bdd3"/><path d="M2.1 6.9 L4.9 9.6 L10.7 3.7" fill="none" stroke="#fff" stroke-width="1.6" stroke-linecap="round" stroke-linejoin="round"/></svg><svg class="a" style="left:579.3px;top:529.4px" width="13.4" height="13.4" viewBox="0 0 13 13"><rect width="13" height="13" rx="2" fill="#7bd3c1"/><path d="M2.1 6.9 L4.9 9.6 L10.7 3.7" fill="none" stroke="#fff" stroke-width="1.6" stroke-linecap="round" stroke-linejoin="round"/></svg><svg class="a" style="left:691.6px;top:529.4px" width="13.4" height="13.4" viewBox="0 0 13 13"><rect width="13" height="13" rx="2" fill="#c3eab6"/><path d="M2.1 6.9 L4.9 9.6 L10.7 3.7" fill="none" stroke="#fff" stroke-width="1.6" stroke-linecap="round" stroke-linejoin="round"/></svg><svg class="a" style="left:254.6px;top:561.7px" width="13.4" height="13.4" viewBox="0 0 13 13"><rect width="13" height="13" rx="2" fill="#c6f2eb"/><path d="M2.1 6.9 L4.9 9.6 L10.7 3.7" fill="none" stroke="#fff" stroke-width="1.6" stroke-linecap="round" stroke-linejoin="round"/></svg><div class="a" style="left:464.5px;top:333px;width:235px;height:114px;background:#fff;border:1px solid #e4e4e4;box-sizing:border-box;box-shadow:0 1px 4px rgba(0,0,0,0.22)"></div><div class="a" style="left:472px;top:357px;width:220px;height:1px;background:#dcdcdc"></div><div class="a" style="left:472px;top:366.7px;width:7.3px;height:7.3px;background:#07a7cd"></div><div class="a" style="left:472px;top:381.2px;width:7.3px;height:7.3px;background:#00bdd3"></div><div class="a" style="left:472px;top:395.8px;width:7.3px;height:7.3px;background:#7bd3c1"></div><div class="a" style="left:472px;top:410.4px;width:7.3px;height:7.3px;background:#c3eab6"></div><div class="a" style="left:472px;top:424.9px;width:7.3px;height:7.3px;background:#c6f2eb"></div><div class="a" style="left:194px;top:670px;width:782.5px;height:1px;background:#e3e3e3"></div><div class="a" style="left:389.9px;top:676.10px;width:586.6px;height:16.2px;background:#7bd3c1"></div><div class="a" style="left:389.9px;top:694.03px;width:293.1px;height:16.2px;background:#00c0d1"></div><div class="a" style="left:389.9px;top:711.96px;width:281.4px;height:16.2px;background:#cbf4ee"></div><div class="a" style="left:389.9px;top:729.89px;width:46.6px;height:16.2px;background:#07a7cd"></div><div class="a" style="left:389.9px;top:747.82px;width:11.3px;height:16.2px;background:#c3eab6"></div><svg class="a" style="left:855px;top:674px" width="18" height="21" viewBox="0 0 18 21"><path d="M10.2 1.2 C14 5.2 12.2 8 9 10.6 C5.8 13.2 4.6 15.6 8 19.2" fill="none" stroke="#fff" stroke-width="4.3"/></svg><div id="txt"><span class="t" id="rep" style="top:10.00px;font-size:11.60px;line-height:12.00px;font-weight:400;color:rgba(255,255,255,0.82);letter-spacing:0.000px;left:141.60px;">Reporting</span>
<span class="t" id="console" style="top:7.00px;font-size:15.70px;line-height:17.00px;font-weight:400;color:rgba(255,255,255,0.84);letter-spacing:0.583px;left:63.40px;">Console</span>
<span class="t" id="ml" style="top:5.00px;font-size:15.00px;line-height:17.00px;font-weight:400;color:#fff;letter-spacing:0.000px;left:992.00px;">ML</span>
<span class="t" id="sb1" style="top:47.00px;font-size:10.10px;line-height:11.00px;font-weight:400;color:#444;letter-spacing:-0.158px;left:25.30px;">Digital Banking Data</span>
<span class="t" id="sb2" style="top:80.00px;font-size:10.10px;line-height:11.00px;font-weight:400;color:#444;letter-spacing:-0.182px;left:25.30px;">Feature Data</span>
<span class="t" id="sb3" style="top:113.00px;font-size:10.10px;line-height:11.00px;font-weight:400;color:#444;letter-spacing:-0.250px;left:25.30px;">Security Data</span>
<span class="t" id="sb4" style="top:145.00px;font-size:10.10px;line-height:11.00px;font-weight:700;color:#333;letter-spacing:0.062px;left:31.00px;">Mitigated Traffic</span>
<span class="t" id="title" style="top:46.00px;font-size:23.80px;line-height:27.00px;font-weight:400;color:#6b6b6b;letter-spacing:0.000px;left:181.70px;">Mitigated Traffic</span>
<span class="t" id="date" style="top:90.00px;font-size:10.80px;line-height:12.00px;font-weight:400;color:#444;letter-spacing:-0.269px;left:191.00px;">May 18, 2021 - May 25, 2021</span>
<span class="t" id="s1l" style="top:134.00px;font-size:10.20px;line-height:11.00px;font-weight:400;color:#777;letter-spacing:-0.129px;left:200.50px;">Traffic flagged as malicious (%)</span>
<span class="t" id="s1v" style="top:151.00px;font-size:23.30px;line-height:26.00px;font-weight:400;color:#7a7a7a;letter-spacing:-1.000px;left:199.50px;">2.10%</span>
<span class="t" id="s2l" style="top:134.00px;font-size:10.20px;line-height:11.00px;font-weight:400;color:#777;letter-spacing:0.133px;left:592.00px;">Total traffic mitigated (count)</span>
<span class="t" id="s2v" style="top:151.00px;font-size:23.30px;line-height:26.00px;font-weight:400;color:#7a7a7a;letter-spacing:0.000px;left:592.00px;">861</span>
<span class="t" id="c2t" style="top:222.00px;font-size:16.30px;line-height:18.00px;font-weight:400;color:#444;letter-spacing:0.115px;left:194.70px;">Traffic mitigation timeline</span>
<span class="t" id="resc" style="top:247.00px;font-size:10.80px;line-height:12.00px;font-weight:400;color:#444;letter-spacing:-0.250px;left:895.00px;">Rescale graph</span>
<span class="t" id="y35" style="top:263.00px;font-size:10.30px;line-height:11.00px;font-weight:400;color:#5e5e5e;letter-spacing:0.000px;right:786.60px;">35</span>
<span class="t" id="y30" style="top:294.00px;font-size:10.30px;line-height:11.00px;font-weight:400;color:#5e5e5e;letter-spacing:0.000px;right:786.60px;">30</span>
<span class="t" id="y25" style="top:325.00px;font-size:10.30px;line-height:11.00px;font-weight:400;color:#5e5e5e;letter-spacing:0.000px;right:786.60px;">25</span>
<span class="t" id="y20" style="top:357.00px;font-size:10.30px;line-height:11.00px;font-weight:400;color:#5e5e5e;letter-spacing:0.000px;right:786.60px;">20</span>
<span class="t" id="y15" style="top:388.00px;font-size:10.30px;line-height:11.00px;font-weight:400;color:#5e5e5e;letter-spacing:0.000px;right:786.60px;">15</span>
<span class="t" id="y10" style="top:419.00px;font-size:10.30px;line-height:11.00px;font-weight:400;color:#5e5e5e;letter-spacing:0.000px;right:786.60px;">10</span>
<span class="t" id="y5" style="top:450.00px;font-size:10.30px;line-height:11.00px;font-weight:400;color:#5e5e5e;letter-spacing:0.000px;right:786.60px;">5</span>
<span class="t" id="y0" style="top:481.00px;font-size:10.30px;line-height:11.00px;font-weight:400;color:#5e5e5e;letter-spacing:0.000px;right:786.60px;">0</span>
<span class="t" id="x0" style="top:500.00px;font-size:10.30px;line-height:11.00px;font-weight:400;color:#5e5e5e;letter-spacing:-0.000px;left:235.60px;">May 18</span>
<span class="t" id="x1" style="top:500.00px;font-size:10.30px;line-height:11.00px;font-weight:400;color:#5e5e5e;letter-spacing:-0.250px;left:288.75px;">12 PM</span>
<span class="t" id="x2" style="top:500.00px;font-size:10.30px;line-height:11.00px;font-weight:400;color:#5e5e5e;letter-spacing:-0.000px;left:336.60px;">May 19</span>
<span class="t" id="x3" style="top:500.00px;font-size:10.30px;line-height:11.00px;font-weight:400;color:#5e5e5e;letter-spacing:-0.250px;left:389.75px;">12 PM</span>
<span class="t" id="x4" style="top:500.00px;font-size:10.30px;line-height:11.00px;font-weight:400;color:#5e5e5e;letter-spacing:-0.000px;left:437.60px;">May 20</span>
<span class="t" id="x5" style="top:500.00px;font-size:10.30px;line-height:11.00px;font-weight:400;color:#5e5e5e;letter-spacing:-0.250px;left:490.75px;">12 PM</span>
<span class="t" id="x6" style="top:500.00px;font-size:10.30px;line-height:11.00px;font-weight:400;color:#5e5e5e;letter-spacing:-0.000px;left:538.60px;">May 21</span>
<span class="t" id="x7" style="top:500.00px;font-size:10.30px;line-height:11.00px;font-weight:400;color:#5e5e5e;letter-spacing:-0.250px;left:591.75px;">12 PM</span>
<span class="t" id="x8" style="top:500.00px;font-size:10.30px;line-height:11.00px;font-weight:400;color:#5e5e5e;letter-spacing:-0.000px;left:639.60px;">May 22</span>
<span class="t" id="x9" style="top:500.00px;font-size:10.30px;line-height:11.00px;font-weight:400;color:#5e5e5e;letter-spacing:-0.250px;left:692.75px;">12 PM</span>
<span class="t" id="x10" style="top:500.00px;font-size:10.30px;line-height:11.00px;font-weight:400;color:#5e5e5e;letter-spacing:-0.000px;left:740.60px;">May 23</span>
<span class="t" id="x11" style="top:500.00px;font-size:10.30px;line-height:11.00px;font-weight:400;color:#5e5e5e;letter-spacing:-0.250px;left:793.75px;">12 PM</span>
<span class="t" id="x12" style="top:500.00px;font-size:10.30px;line-height:11.00px;font-weight:400;color:#5e5e5e;letter-spacing:-0.000px;left:841.60px;">May 24</span>
<span class="t" id="x13" style="top:500.00px;font-size:10.30px;line-height:11.00px;font-weight:400;color:#5e5e5e;letter-spacing:-0.250px;left:894.75px;">12 PM</span>
<span class="t" id="l1" style="top:530.00px;font-size:10.80px;line-height:12.00px;font-weight:400;color:#4a4a4a;letter-spacing:-0.000px;left:272.50px;">Q2 proprietary intelligence feeds</span>
<span class="t" id="l2" style="top:530.00px;font-size:10.80px;line-height:12.00px;font-weight:400;color:#4a4a4a;letter-spacing:-0.050px;left:463.50px;">External threat feeds</span>
<span class="t" id="l3" style="top:530.00px;font-size:10.80px;line-height:12.00px;font-weight:400;color:#4a4a4a;letter-spacing:0.071px;left:597.60px;">Anti-automation</span>
<span class="t" id="l4" style="top:530.00px;font-size:10.80px;line-height:12.00px;font-weight:400;color:#4a4a4a;letter-spacing:-0.067px;left:709.90px;">Geo-restrictions</span>
<span class="t" id="l5" style="top:562.00px;font-size:10.80px;line-height:12.00px;font-weight:400;color:#4a4a4a;letter-spacing:-0.033px;left:272.50px;">Session anomaly / rate limiting</span>
<span class="t" id="tt0" style="top:338.00px;font-size:10.80px;line-height:12.00px;font-weight:400;color:#4a4a4a;letter-spacing:-0.211px;left:472.00px;">Wed, May 19 11:05 PM</span>
<span class="t" id="tv0" style="top:338.00px;font-size:10.80px;line-height:12.00px;font-weight:400;color:#4a4a4a;letter-spacing:0.000px;left:665.00px;">5</span>
<span class="t" id="tt1" style="top:364.00px;font-size:10.80px;line-height:12.00px;font-weight:400;color:#4a4a4a;letter-spacing:-0.000px;left:483.60px;">Q2 proprietary intelligence feeds</span>
<span class="t" id="tv1" style="top:364.00px;font-size:10.80px;line-height:12.00px;font-weight:400;color:#4a4a4a;letter-spacing:0.000px;left:664.60px;">0</span>
<span class="t" id="tt2" style="top:379.00px;font-size:10.80px;line-height:12.00px;font-weight:400;color:#4a4a4a;letter-spacing:-0.050px;left:483.60px;">External threat feeds</span>
<span class="t" id="tv2" style="top:379.00px;font-size:10.80px;line-height:12.00px;font-weight:400;color:#4a4a4a;letter-spacing:0.000px;left:664.60px;">0</span>
<span class="t" id="tt3" style="top:393.00px;font-size:10.80px;line-height:12.00px;font-weight:400;color:#4a4a4a;letter-spacing:0.071px;left:483.60px;">Anti-automation</span>
<span class="t" id="tv3" style="top:393.00px;font-size:10.80px;line-height:12.00px;font-weight:400;color:#4a4a4a;letter-spacing:0.000px;left:664.60px;">5</span>
<span class="t" id="tt4" style="top:408.00px;font-size:10.80px;line-height:12.00px;font-weight:400;color:#4a4a4a;letter-spacing:-0.067px;left:483.60px;">Geo-restrictions</span>
<span class="t" id="tv4" style="top:408.00px;font-size:10.80px;line-height:12.00px;font-weight:400;color:#4a4a4a;letter-spacing:0.000px;left:664.60px;">0</span>
<span class="t" id="tt5" style="top:422.00px;font-size:10.80px;line-height:12.00px;font-weight:400;color:#4a4a4a;letter-spacing:-0.033px;left:483.60px;">Session anomaly / rate limiting</span>
<span class="t" id="tv5" style="top:422.00px;font-size:10.80px;line-height:12.00px;font-weight:400;color:#4a4a4a;letter-spacing:0.000px;left:664.60px;">0</span>
<span class="t" id="c3t" style="top:626.00px;font-size:16.30px;line-height:18.00px;font-weight:400;color:#444;letter-spacing:0.086px;left:194.00px;">Mitigated traffic by security method</span>
<span class="t" id="h1" style="top:654.00px;font-size:10.80px;line-height:12.00px;font-weight:700;color:#444;letter-spacing:-0.286px;left:194.00px;">Security method</span>
<span class="t" id="h2" style="top:654.00px;font-size:10.80px;line-height:12.00px;font-weight:700;color:#444;letter-spacing:-0.125px;left:365.30px;">Mitigated traffic</span>
<span class="t" id="axb" style="top:652.00px;font-size:10.80px;line-height:12.00px;font-weight:400;color:#666;letter-spacing:-0.222px;left:471.00px;">Axis Break</span>
<span class="t" id="r0" style="top:678.00px;font-size:10.80px;line-height:12.00px;font-weight:700;color:#444;letter-spacing:-0.500px;left:194.00px;">Anti-automation</span>
<span class="t" id="rv0" style="top:678.00px;font-size:10.80px;line-height:12.00px;font-weight:400;color:#555;letter-spacing:0.000px;left:365.30px;">753</span>
<span class="t" id="r1" style="top:696.00px;font-size:10.80px;line-height:12.00px;font-weight:700;color:#444;letter-spacing:-0.200px;left:194.00px;">External threat feeds</span>
<span class="t" id="rv1" style="top:696.00px;font-size:10.80px;line-height:12.00px;font-weight:400;color:#555;letter-spacing:0.000px;left:365.30px;">50</span>
<span class="t" id="r2" style="top:714.00px;font-size:10.80px;line-height:12.00px;font-weight:700;color:#444;letter-spacing:-0.233px;left:194.00px;">Session anomaly / rate limiting</span>
<span class="t" id="rv2" style="top:714.00px;font-size:10.80px;line-height:12.00px;font-weight:400;color:#555;letter-spacing:0.000px;left:365.30px;">48</span>
<span class="t" id="r3" style="top:731.00px;font-size:10.80px;line-height:12.00px;font-weight:700;color:#444;letter-spacing:-0.219px;left:194.00px;">Q2 proprietary intelligence feeds</span>
<span class="t" id="rv3" style="top:731.00px;font-size:10.80px;line-height:12.00px;font-weight:400;color:#555;letter-spacing:0.000px;left:365.30px;">8</span>
<span class="t" id="r4" style="top:749.00px;font-size:10.80px;line-height:12.00px;font-weight:700;color:#444;letter-spacing:-0.333px;left:194.00px;">Geo-restrictions</span>
<span class="t" id="rv4" style="top:749.00px;font-size:10.80px;line-height:12.00px;font-weight:400;color:#555;letter-spacing:0.000px;left:365.30px;">2</span></div></body></html>
